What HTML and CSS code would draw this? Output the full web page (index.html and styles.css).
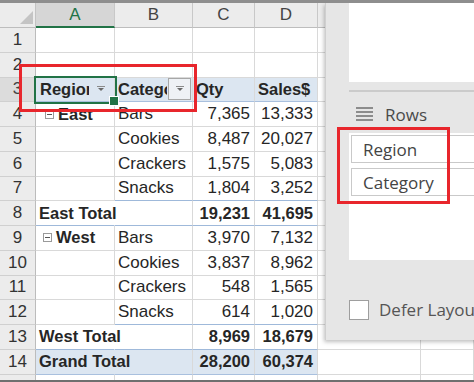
FILE: index.html
```html
<!DOCTYPE html>
<html>
<head>
<meta charset="utf-8">
<link rel="stylesheet" href="styles.css">
</head>
<body>
<div class="window">
  <div class="sheet">
    <div class="c corner"><svg class="tri" width="13" height="13" viewBox="0 0 13 13"><polygon points="13,0 13,13 0,13" fill="#c4c4c4"/></svg></div>
    <div class="c hdr sel">A</div><div class="c hdr">B</div><div class="c hdr">C</div><div class="c hdr">D</div><div class="c hdr">E</div><div class="c hdr">F</div>

    <div class="c rh">1</div><div class="c"></div><div class="c"></div><div class="c"></div><div class="c"></div><div class="c"></div><div class="c"></div>
    <div class="c rh">2</div><div class="c"></div><div class="c"></div><div class="c"></div><div class="c"></div><div class="c"></div><div class="c"></div>

    <div class="c rh rsel">3</div>
    <div class="c ph b active a3"><span class="lab la">Region</span><span class="dd"><svg width="8" height="6" viewBox="0 0 8 6"><rect x="0" y="0" width="8" height="1" fill="#8a8a8a"/><polygon points="1,2 7,2 4,5" fill="#6a6a6a"/></svg></span></div>
    <div class="c ph b b3"><span class="lab lb">Category</span><span class="dd btn"><svg width="8" height="6" viewBox="0 0 8 6"><rect x="0" y="0" width="8" height="1" fill="#8a8a8a"/><polygon points="1,2 7,2 4,5" fill="#6a6a6a"/></svg></span></div>
    <div class="c ph b">Qty</div>
    <div class="c ph b">Sales$</div>
    <div class="c"></div><div class="c"></div>

    <div class="c rh">4</div><div class="c b"><span class="tog"></span>East</div><div class="c">Bars</div><div class="c num">7,365</div><div class="c num">13,333</div><div class="c"></div><div class="c"></div>
    <div class="c rh">5</div><div class="c"></div><div class="c">Cookies</div><div class="c num">8,487</div><div class="c num">20,027</div><div class="c"></div><div class="c"></div>
    <div class="c rh">6</div><div class="c"></div><div class="c">Crackers</div><div class="c num">1,575</div><div class="c num">5,083</div><div class="c"></div><div class="c"></div>
    <div class="c rh">7</div><div class="c"></div><div class="c bl">Snacks</div><div class="c num bl">1,804</div><div class="c num bl">3,252</div><div class="c"></div><div class="c"></div>
    <div class="c rh">8</div><div class="c b over bl">East Total</div><div class="c bl"></div><div class="c num b bl">19,231</div><div class="c num b bl">41,695</div><div class="c"></div><div class="c"></div>
    <div class="c rh">9</div><div class="c b"><span class="tog w"></span>West</div><div class="c">Bars</div><div class="c num">3,970</div><div class="c num">7,132</div><div class="c"></div><div class="c"></div>
    <div class="c rh">10</div><div class="c"></div><div class="c">Cookies</div><div class="c num">3,837</div><div class="c num">8,962</div><div class="c"></div><div class="c"></div>
    <div class="c rh">11</div><div class="c"></div><div class="c">Crackers</div><div class="c num">548</div><div class="c num">1,565</div><div class="c"></div><div class="c"></div>
    <div class="c rh">12</div><div class="c"></div><div class="c bl">Snacks</div><div class="c num bl">614</div><div class="c num bl">1,020</div><div class="c"></div><div class="c"></div>
    <div class="c rh">13</div><div class="c b over bl">West Total</div><div class="c bl"></div><div class="c num b bl">8,969</div><div class="c num b bl">18,679</div><div class="c"></div><div class="c"></div>
    <div class="c rh">14</div><div class="c b over gt">Grand Total</div><div class="c gt"></div><div class="c num b gt">28,200</div><div class="c num b gt">60,374</div><div class="c"></div><div class="c"></div>
    <div class="c rh"></div><div class="c"></div><div class="c"></div><div class="c"></div><div class="c"></div><div class="c"></div><div class="c"></div>
  </div>

  <div class="pane">
    <div class="pane-top"></div>
    <div class="pane-rule"></div>
    <div class="rows-head">
      <svg class="rows-icon" width="17" height="14" viewBox="0 0 17 14"><rect x="0" y="0" width="17" height="2" fill="#8c8c8c"/><rect x="0" y="4" width="17" height="2" fill="#8c8c8c"/><rect x="0" y="8" width="17" height="2" fill="#8c8c8c"/><rect x="0" y="12" width="17" height="2" fill="#8c8c8c"/></svg>
      <span class="rows-title">Rows</span>
    </div>
    <div class="fields">
      <div class="field">Region</div>
      <div class="field">Category</div>
    </div>
    <div class="defer"><span class="chk"></span><span class="defer-text">Defer Layout Update</span></div>
  </div>

  <div class="mark mark-a"></div>
  <div class="mark mark-b"></div>
</div>
</body>
</html>
```

FILE: styles.css
```css
* { box-sizing: border-box; margin: 0; padding: 0; }
body { margin: 0; background: #fff; font-family: "Liberation Sans", Arial, sans-serif; }

.window {
  position: relative;
  width: 474px;
  height: 382px;
  overflow: hidden;
  background: #fff;
  border-top: 3px solid #8e8e8e;
  border-bottom: 2px solid #6f6f6f;
}

.sheet {
  display: grid;
  grid-template-columns: 36px 79px 78px 62px 63px 103px 1fr;
  grid-template-rows: 25px;
  grid-auto-rows: 24.75px;
  font-size: 17px;
  color: #262626;
}

.c {
  display: flex;
  align-items: center;
  padding: 0 4px 0 3px;
  white-space: nowrap;
  min-width: 0;
  border-right: 1px solid #d9d9d9;
  border-bottom: 1px solid #d9d9d9;
}

.num { justify-content: flex-end; }
.b { font-weight: bold; font-size: 16.5px; }

.corner {
  background: #ececec;
  border-right: 1px solid #c3c3c3;
  border-bottom: 1px solid #bdbdbd;
  justify-content: flex-end;
  align-items: flex-end;
  padding: 0 2px 3px 0;
}
.tri { display: block; }

.hdr {
  background: #ececec;
  justify-content: center;
  color: #444;
  border-right: 1px solid #c8c8c8;
  border-bottom: 1px solid #bdbdbd;
  padding: 0;
}
.hdr.sel {
  background: #d6d6d6;
  color: #217346;
  border-bottom: 2px solid #217346;
}

.rh {
  background: #ececec;
  justify-content: center;
  color: #333;
  border-right: 1px solid #bcbcbc;
  border-bottom: 1px solid #d0d0d0;
  padding: 0;
}
.rh.rsel { background: #dcdcdc; color: #444; }

.ph {
  background: #dce6f1;
  border-bottom: 1px solid #a9c0de;
}

.a3 { padding: 0 2px 0 4px; }
.b3 { padding: 0 0 0 3px; }
.lab { display: block; overflow: hidden; flex: none; }
.la { width: 49px; }
.lb { width: 49px; }

.dd {
  flex: none;
  width: 22px;
  height: 22px;
  margin-left: 1px;
  display: flex;
  align-items: center;
  justify-content: center;
}
.dd.btn {
  width: 23px;
  height: 22px;
  margin-left: 1px;
  background: #eef1f5;
  border: 1px solid #a7a7a7;
}

.active {
  position: relative;
  z-index: 2;
  outline: 2px solid #217346;
  outline-offset: 0;
}
.active::after {
  content: "";
  position: absolute;
  right: -5px;
  bottom: -5px;
  width: 8px;
  height: 8px;
  background: #217346;
  border: 1px solid #fff;
}

.tog {
  position: relative;
  flex: none;
  width: 9px;
  height: 9px;
  margin: 0 4px 0 6px;
  border: 1px solid #9a9a9a;
  background: #fff;
}
.tog::after {
  content: "";
  position: absolute;
  left: 1px;
  right: 1px;
  top: 3px;
  height: 1px;
  background: #555;
}
.tog.w { margin-left: 4px; }

.over { z-index: 1; border-right-color: transparent; }
.bl { border-bottom: 1px solid #9fb9da; }
.gt { background: #dce6f1; border-bottom: 1px solid #a9c0de; }

.pane {
  position: absolute;
  left: 325px;
  top: 0;
  width: 165px;
  height: 337px;
  background: #e6e6e6;
  border-left: 1px solid #cfcfcf;
  box-shadow: -1px 2px 4px rgba(0, 0, 0, 0.25);
  padding-left: 23px;
  display: flex;
  flex-direction: column;
  font-family: "Open Sans", "Liberation Sans", sans-serif;
}
.pane-top { height: 79px; background: #fff; }
.pane-rule { height: 2px; margin-top: 8px; background: #cbcbcb; }
.rows-head {
  display: flex;
  align-items: center;
  height: 20px;
  margin-top: 12px;
  padding-left: 7px;
}
.rows-icon { display: block; }
.rows-title { margin-left: 12px; font-size: 17px; color: #4a4a4a; }

.fields {
  margin-top: 9px;
  height: 127px;
  background: #fff;
  padding: 2px 0 0 2px;
  display: flex;
  flex-direction: column;
  gap: 5px;
}
.field {
  height: 28px;
  border: 1px solid #c9c9c9;
  padding-left: 11px;
  display: flex;
  align-items: center;
  font-size: 17px;
  color: #444;
}

.defer {
  margin-top: 38px;
  display: flex;
  align-items: center;
  white-space: nowrap;
}
.chk {
  flex: none;
  width: 20px;
  height: 20px;
  background: #fff;
  border: 1px solid #9e9e9e;
}
.defer-text { margin-left: 10px; font-size: 17px; color: #555; }

.mark {
  position: absolute;
  border: 3px solid #e8262c;
  z-index: 5;
}
.mark-a { left: 19px; top: 61px; width: 178px; height: 48px; }
.mark-b { left: 337px; top: 124px; width: 113px; height: 77px; }
```
